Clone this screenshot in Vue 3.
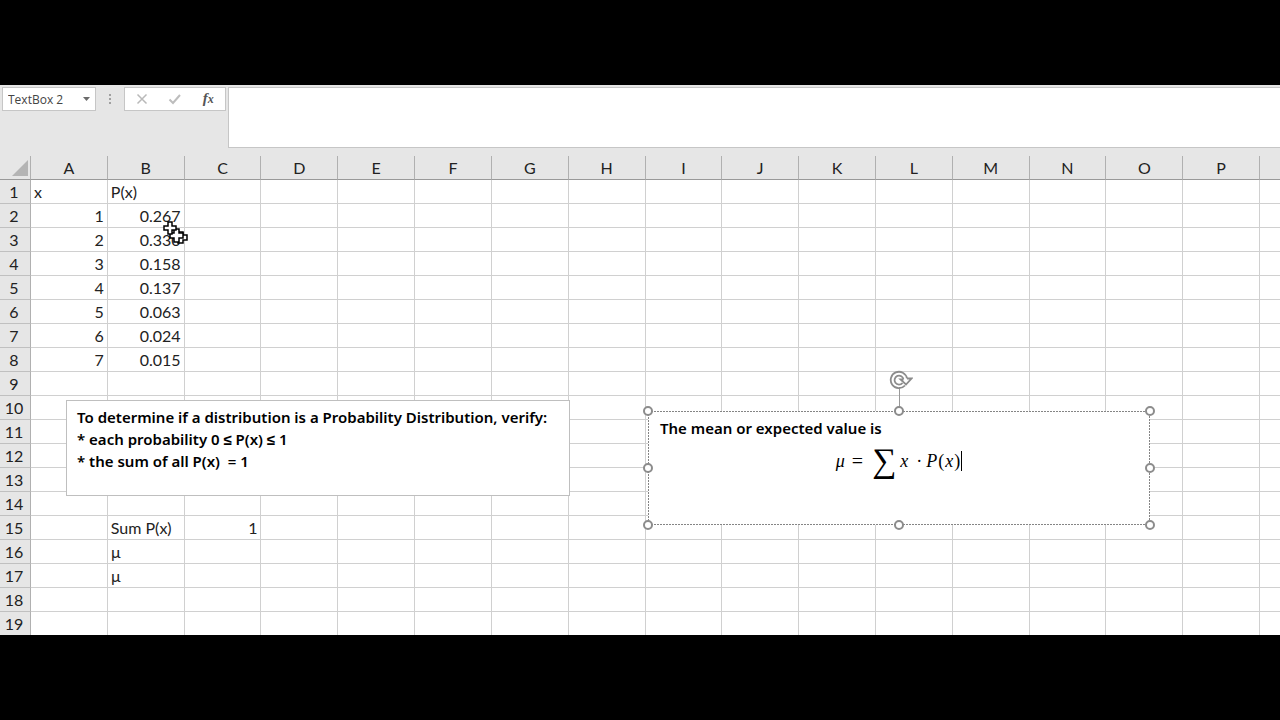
<script setup>
import { ref } from 'vue'

const columns = 'ABCDEFGHIJKLMNOP'.split('')

const values = {
  A1: 'x', B1: 'P(x)',
  A2: 1, B2: '0.267',
  A3: 2, B3: '0.330',
  A4: 3, B4: '0.158',
  A5: 4, B5: '0.137',
  A6: 5, B6: '0.063',
  A7: 6, B7: '0.024',
  A8: 7, B8: '0.015',
  B15: 'Sum P(x)', C15: 1,
  B16: 'µ',
  B17: 'µ'
}

const isNumber = (v) => v !== undefined && !isNaN(Number(v))

const objectName = ref('TextBox 2')
const formula = ref('')
const handles = ['nw', 'n', 'ne', 'w', 'e', 'sw', 's', 'se']
</script>

<template>
  <div class="screen">
    <main class="workbook">
      <header class="formula-bar">
        <div class="name-box">
          <input v-model="objectName" class="name-input" type="text" aria-label="Name box" />
          <button class="name-drop" type="button" aria-label="Show names">
            <svg width="7" height="4" viewBox="0 0 7 4"><path d="M0 0h7L3.500 4z" fill="#6b6b6b" /></svg>
          </button>
        </div>
        <svg class="grip" width="2" height="10" viewBox="0 0 2 10" fill="#a0a0a0">
          <path d="M0 0h2v2H0zM0 4h2v2H0zM0 8h2v2H0z" />
        </svg>
        <div class="actions">
          <button type="button" aria-label="Cancel">
            <svg width="12" height="12" viewBox="0 0 12 12" fill="none" stroke="#b9b9b9" stroke-width="1.500">
              <path d="M1.500 1.500l9 9M10.500 1.500l-9 9" />
            </svg>
          </button>
          <button type="button" aria-label="Enter">
            <svg width="14" height="12" viewBox="0 0 14 12" fill="none" stroke="#bdbdbd" stroke-width="2">
              <path d="M1.500 6.500l3.500 3.500L12 2" />
            </svg>
          </button>
          <button class="fx" type="button" aria-label="Insert function">f<small>x</small></button>
        </div>
        <textarea v-model="formula" class="formula" aria-label="Formula bar"></textarea>
      </header>

      <section class="sheet">
        <table>
          <colgroup>
            <col class="col-index" />
            <col v-for="c in columns" :key="c" />
            <col class="col-rest" />
          </colgroup>
          <thead>
            <tr>
              <th class="corner" aria-label="Select all">
                <svg width="16" height="16" viewBox="0 0 16 16"><path d="M16 0v16H0z" fill="#b4b4b4" /></svg>
              </th>
              <th v-for="c in columns" :key="c" scope="col">{{ c }}</th>
              <th></th>
            </tr>
          </thead>
          <tbody>
            <tr v-for="r in 19" :key="r">
              <th scope="row">{{ r }}</th>
              <td v-for="c in columns" :key="c" :class="{ number: isNumber(values[c + r]) }">{{ values[c + r] }}</td>
              <td></td>
            </tr>
          </tbody>
        </table>

        <div class="note note-verify">
          <p>To determine if a distribution is a Probability Distribution, verify:</p>
          <p>* each probability 0 ≤ P(x) ≤ 1</p>
          <p>* the sum of all P(x)&nbsp; = 1</p>
        </div>

        <div class="note note-mean">
          <p>The mean or expected value is</p>
          <div class="equation">
            <i>μ</i><span class="equals">=</span><span class="sigma">∑</span><i>x</i><span class="dot">·</span><i>P</i><span class="paren">(</span><i>x</i><span class="paren">)</span><span class="caret"></span>
          </div>
          <svg class="frame" width="100%" height="100%">
            <rect width="100%" height="100%" fill="none" stroke="#858585" stroke-width="2" stroke-dasharray="2 1" />
          </svg>
          <span class="stem"></span>
          <svg class="rotate" width="24" height="20" viewBox="0 0 24 20">
            <path d="M16 15.500A8.200 8.200 0 1 1 18 8.500" fill="none" stroke="#8c8c8c" stroke-width="1.800" />
            <path d="M13.500 13A4.500 4.500 0 1 1 14.500 9.500" fill="none" stroke="#8c8c8c" stroke-width="1.800" />
            <path d="M18 8.500h4.500L17 14.500l-5.500-5h3" fill="#fff" stroke="#8c8c8c" stroke-width="1.800" />
          </svg>
          <span v-for="h in handles" :key="h" class="handle" :class="h"></span>
        </div>

        <svg class="pointer" width="26" height="25" viewBox="0 0 26 25" fill="#fff" stroke="#000" stroke-width="1.500">
          <path d="M15 11h5v3h4v5h-4v3h-5v-3h-3v-5h3z" />
          <path d="M11 8h5v4h4v5h-4v4h-5v-4H7v-5h4z" />
          <path d="M5 1h4v4h4v4H9v4H5V9H1V5h4z" />
        </svg>
      </section>
    </main>
  </div>
</template>

<style>
body {
  margin: 0;
  background: #000;
}
</style>

<style scoped>
.screen {
  display: grid;
  grid-template-rows: minmax(0, 1fr);
  box-sizing: border-box;
  height: 100vh;
  padding: 85px 0;
  background: #000;
  font-family: Lato, "Liberation Sans", sans-serif;
  font-variant-ligatures: none;
  color: #222;
}
.workbook {
  display: flex;
  flex-direction: column;
  overflow: hidden;
  background: #e6e6e6;
}
.formula-bar {
  display: flex;
  align-items: flex-start;
  flex: none;
  height: 61px;
  padding: 2px 0 8px 2px;
}
.name-box,
.actions {
  display: flex;
  align-items: center;
  box-sizing: border-box;
  height: 24px;
  border: 1px solid #c6c6c6;
  background: #fff;
}
.name-box {
  width: 94px;
}
.name-input {
  flex: 1;
  min-width: 0;
  padding: 0 0 0 5px;
  border: 0;
  outline: 0;
  background: none;
  font: 12px "Open Sans", sans-serif;
  color: #444;
}
button {
  display: flex;
  align-items: center;
  justify-content: center;
  padding: 0;
  border: 0;
  background: none;
}
.name-drop {
  width: 18px;
  height: 22px;
}
.grip {
  margin: 7px 13px 0 13px;
}
.actions {
  width: 102px;
  margin-right: 2px;
}
.actions button {
  flex: 1;
  height: 22px;
}
.actions .fx {
  align-items: baseline;
  font: italic bold 15px/20px "Liberation Serif", serif;
  color: #555;
}
.fx small {
  font-size: 12px;
}
.formula {
  flex: 1;
  box-sizing: border-box;
  height: 61px;
  padding: 4px;
  border: 1px solid #c6c6c6;
  border-right: 0;
  outline: 0;
  resize: none;
  background: #fff;
}
.sheet {
  position: relative;
  flex: 1;
  min-height: 0;
}
table {
  width: 100%;
  table-layout: fixed;
  border-collapse: separate;
  border-spacing: 0;
  background: #fff;
  font-size: 16px;
  line-height: 23px;
}
.col-index {
  width: 31px;
}
.col-rest {
  width: 20px;
}
th,
td {
  box-sizing: border-box;
  height: 24px;
  padding: 0 3px;
  border-right: 1px solid #d0d0d0;
  border-bottom: 1px solid #d0d0d0;
  text-align: left;
  white-space: nowrap;
}
tr > :last-child {
  border-right: 0;
}
.number {
  text-align: right;
}
th {
  padding: 0;
  background: #e6e6e6;
  font-weight: 400;
  text-align: center;
}
thead th {
  border-bottom-color: #999;
  border-right-color: #b0b0b0;
}
tbody th {
  padding-right: 2px;
  border-right-color: #b0b0b0;
  border-bottom-color: #c0c0c0;
}
.corner {
  padding-right: 2px;
  text-align: right;
  vertical-align: bottom;
}
.corner svg {
  display: block;
  margin: 0 0 3px auto;
}
.note {
  position: absolute;
  box-sizing: border-box;
  background: #fff;
  font-family: "Noto Sans", sans-serif;
  font-size: 15px;
  font-weight: 600;
  line-height: 22px;
  color: #000;
  white-space: nowrap;
}
.note p {
  margin: 0;
}
.note-verify {
  top: 244px;
  left: 66px;
  width: 504px;
  height: 96px;
  padding: 5px 10px;
  border: 1px solid #bfbfbf;
}
.note-mean {
  top: 255px;
  left: 648px;
  width: 502px;
  height: 114px;
  padding: 6px 12px;
}
.equation {
  display: flex;
  align-items: center;
  justify-content: center;
  height: 44px;
  font: 18px "Liberation Serif", serif;
}
.equals {
  margin: 0 9px 0 7px;
  font-size: 20px;
}
.sigma {
  margin-right: 4px;
  font-size: 34px;
  line-height: 42px;
}
.dot {
  margin: 0 4px 0 8px;
}
.paren {
  margin: 0 1px;
}
.caret {
  width: 1px;
  height: 20px;
  background: #000;
}
.frame {
  position: absolute;
  inset: 0;
}
.stem {
  position: absolute;
  top: -24px;
  left: 50%;
  width: 1px;
  height: 24px;
  background: #999;
}
.rotate {
  position: absolute;
  top: -41px;
  left: 241px;
}
.handle {
  position: absolute;
  box-sizing: border-box;
  width: 10px;
  height: 10px;
  margin: -5px;
  border: 2px solid #8c8c8c;
  border-radius: 50%;
  background: #fff;
}
.nw, .n, .ne { top: 0; }
.w, .e { top: 50%; }
.sw, .s, .se { top: 100%; }
.nw, .w, .sw { left: 0; }
.n, .s { left: 50%; }
.ne, .e, .se { left: 100%; }
.pointer {
  position: absolute;
  top: 65px;
  left: 163px;
}
</style>
